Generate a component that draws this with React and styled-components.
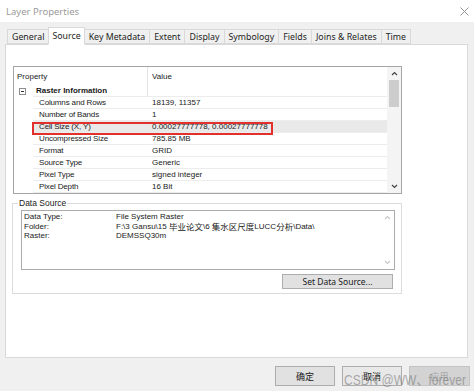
import React from 'react'
import styled, { createGlobalStyle } from 'styled-components'

const GlobalStyle = createGlobalStyle`
  html, body {
    margin: 0;
    padding: 0;
    background: #f0f0f0;
  }
  body {
    font-family: "Noto Sans", "Noto Sans CJK SC", sans-serif;
  }
  * {
    box-sizing: border-box;
  }
`

const Window = styled.div`
  position: relative;
  width: 474px;
  height: 391px;
  display: flex;
  flex-direction: column;
  background: #f0f0f0;
  overflow: hidden;
`

const TitleBar = styled.div`
  height: 22px;
  flex: none;
  background: #fff;
  display: flex;
  align-items: center;
  justify-content: space-between;
  padding: 0 5px 0 6px;
  font-size: 9.5px;
  color: #9a9a9a;
`

const TabStrip = styled.div`
  height: 22px;
  flex: none;
  display: flex;
  align-items: flex-end;
  padding-left: 7px;
  position: relative;
  z-index: 1;
`

const Tab = styled.div`
  height: ${p => (p.$active ? 18 : 15)}px;
  margin-bottom: ${p => (p.$active ? -1 : 0)}px;
  margin-left: -1px;
  padding: 0 ${p => (p.$active ? 3 : 4)}px;
  display: flex;
  align-items: ${p => (p.$active ? 'flex-start' : 'center')};
  padding-top: ${p => (p.$active ? 2 : 0)}px;
  background: ${p => (p.$active ? '#fff' : '#f0f0f0')};
  border: 1px solid #d9d9d9;
  border-bottom-color: ${p => (p.$active ? '#fff' : '#d9d9d9')};
  font-size: 8.8px;
  color: #1e1e1e;
  white-space: nowrap;
  &:first-child {
    margin-left: 0;
  }
`

const Panel = styled.div`
  height: 314px;
  flex: none;
  margin: 0 6px 0 5px;
  background: #fff;
  border: 1px solid #d9d9d9;
  padding: 21px 0 0 7px;
  font-family: "Liberation Sans", Arial, "Noto Sans CJK SC", sans-serif;
  font-size: 8px;
  color: #1a1a1a;
`

const Grid = styled.div`
  width: 389px;
  height: 128px;
  border: 1px solid #a5a5a5;
  display: flex;
`

const GridBody = styled.div`
  flex: 1;
  display: flex;
  flex-direction: column;
`

const HeaderRow = styled.div`
  height: 18px;
  display: flex;
  align-items: center;
`

const HeaderCell = styled.div`
  height: 100%;
  display: flex;
  align-items: center;
  width: ${p => p.$width || 'auto'};
  padding-left: ${p => p.$pad}px;
  border-right: ${p => (p.$divider ? '1px solid #e3e3e3' : 'none')};
  flex: ${p => (p.$width ? 'none' : 1)};
`

const Row = styled.div`
  position: relative;
  height: 12px;
  display: flex;
`

const Gutter = styled.div`
  width: 19px;
  flex: none;
  display: flex;
  align-items: center;
  justify-content: center;
  padding-right: 3px;
`

const Expander = styled.div`
  width: 7px;
  height: 7px;
  border: 1px solid #8c8c8c;
  position: relative;
  &::after {
    content: '';
    position: absolute;
    left: 1px;
    right: 1px;
    top: 2px;
    height: 1px;
    background: #333;
  }
`

const Cells = styled.div`
  flex: 1;
  display: flex;
  border-bottom: 1px solid #ececec;
  background: ${p => (p.$selected ? '#e9e9e9' : 'transparent')};
`

const Label = styled.div`
  width: 115px;
  flex: none;
  display: flex;
  align-items: center;
  padding-left: ${p => (p.$category ? 3 : 6)}px;
  font-weight: ${p => (p.$category ? 700 : 400)};
  letter-spacing: ${p => (p.$category ? 0 : -0.15)}px;
  border-right: ${p => (p.$category ? '1px solid #e3e3e3' : 'none')};
  white-space: nowrap;
`

const Value = styled.div`
  flex: 1;
  display: flex;
  align-items: center;
  padding-left: 4px;
  white-space: nowrap;
`

const Highlight = styled.div`
  position: absolute;
  left: 18px;
  top: 1px;
  width: 241px;
  height: 13px;
  border: 2px solid #e2302c;
`

const ScrollBar = styled.div`
  width: 14px;
  flex: none;
  display: flex;
  flex-direction: column;
  background: ${p => (p.$disabled ? 'transparent' : '#f4f4f4')};
`

const ScrollArrow = styled.div`
  height: 13px;
  flex: none;
  display: flex;
  align-items: center;
  justify-content: center;
`

const ScrollTrack = styled.div`
  flex: 1;
  padding: 0 2px;
`

const Thumb = styled.div`
  height: 27px;
  background: #cdcdcd;
`

const GroupBox = styled.fieldset`
  width: 390px;
  margin: 4px 0 0 -1px;
  padding: 2px 6px 4px 8px;
  border: 1px solid #dcdcdc;
`

const Legend = styled.legend`
  padding: 0 1px;
  margin-left: -3px;
  font-size: 8.5px;
  line-height: 10px;
  color: #1a1a1a;
`

const TextBox = styled.div`
  height: 60px;
  border: 1px solid #ababab;
  display: flex;
`

const InfoLines = styled.div`
  flex: 1;
  padding: 1px 0 0 2px;
`

const InfoLine = styled.div`
  height: 9.4px;
  display: flex;
  align-items: center;
  white-space: pre;
`

const InfoKey = styled.span`
  width: 92px;
  flex: none;
`

const Cjk = styled.span`
  font-family: "Noto Sans CJK SC", sans-serif;
  font-size: 8.5px;
`

const ActionRow = styled.div`
  display: flex;
  justify-content: flex-end;
  margin-top: 4px;
  padding-right: 2px;
`

const Button = styled.div`
  width: ${p => p.$width}px;
  height: ${p => p.$height}px;
  display: flex;
  align-items: center;
  justify-content: center;
  background: ${p => (p.$disabled ? '#d3d3d3' : p.$light ? '#e8e8e8' : '#e1e1e1')};
  border: 1px solid ${p => (p.$disabled ? '#c4c4c4' : '#adadad')};
  color: ${p => (p.$disabled ? '#a8a8a8' : '#1a1a1a')};
  font-family: "Noto Sans", "Noto Sans CJK SC", sans-serif;
  font-size: ${p => p.$size || 9}px;
`

const Footer = styled.div`
  flex: 1;
  display: flex;
  justify-content: flex-end;
  align-items: flex-start;
  gap: 7px;
  padding: 8px 4px 0 0;
`

const Watermark = styled.div`
  position: absolute;
  left: 344px;
  top: 369px;
  font-family: "Liberation Sans", Arial, "Noto Sans CJK SC", sans-serif;
  font-size: 14px;
  color: rgba(110, 110, 110, 0.55);
  white-space: nowrap;
  transform: scaleX(0.86);
  transform-origin: left center;
  pointer-events: none;
`

const Chevron = ({ up, color = '#404040' }) => (
  <svg width="7" height="5" viewBox="0 0 7 5">
    <polyline
      points={up ? '1,4 3.5,1.5 6,4' : '1,1 3.5,3.5 6,1'}
      fill="none"
      stroke={color}
      strokeWidth="1.1"
    />
  </svg>
)

const CloseIcon = () => (
  <svg width="9" height="9" viewBox="0 0 9 9">
    <path d="M0.5 0.5 L8.5 8.5 M8.5 0.5 L0.5 8.5" stroke="#8a8a8a" strokeWidth="0.9" />
  </svg>
)

const tabs = ['General', 'Source', 'Key Metadata', 'Extent', 'Display', 'Symbology', 'Fields', 'Joins & Relates', 'Time']

const rasterRows = [
  ['Columns and Rows', '18139, 11357'],
  ['Number of Bands', '1'],
  ['Cell Size (X, Y)', '0.00027777778, 0.00027777778', true],
  ['Uncompressed Size', '785.85 MB'],
  ['Format', 'GRID'],
  ['Source Type', 'Generic'],
  ['Pixel Type', 'signed integer'],
  ['Pixel Depth', '16 Bit'],
]

const App = () => {
  return (
    <Window>
      <GlobalStyle />
      <TitleBar>
        <span>Layer Properties</span>
        <CloseIcon />
      </TitleBar>
      <TabStrip>
        {tabs.map(t => (
          <Tab key={t} $active={t === 'Source'}>{t}</Tab>
        ))}
      </TabStrip>
      <Panel>
        <Grid>
          <GridBody>
            <HeaderRow>
              <HeaderCell $width="134px" $pad={3} $divider>Property</HeaderCell>
              <HeaderCell $pad={4}>Value</HeaderCell>
            </HeaderRow>
            <Row>
              <Gutter><Expander /></Gutter>
              <Cells>
                <Label $category>Raster Information</Label>
                <Value />
              </Cells>
            </Row>
            {rasterRows.map(([name, value, selected]) => (
              <Row key={name}>
                <Gutter />
                <Cells $selected={selected}>
                  <Label>{name}</Label>
                  <Value>{value}</Value>
                </Cells>
                {selected && <Highlight />}
              </Row>
            ))}
          </GridBody>
          <ScrollBar>
            <ScrollArrow><Chevron up /></ScrollArrow>
            <ScrollTrack><Thumb /></ScrollTrack>
            <ScrollArrow><Chevron /></ScrollArrow>
          </ScrollBar>
        </Grid>

        <GroupBox>
          <Legend>Data Source</Legend>
          <TextBox>
            <InfoLines>
              <InfoLine><InfoKey>Data Type:</InfoKey>File System Raster</InfoLine>
              <InfoLine>
                <InfoKey>Folder:</InfoKey>
                {'F:\\3 Gansu\\15 '}<Cjk>毕业论文</Cjk>{'\\6 '}<Cjk>集水区尺度</Cjk>LUCC<Cjk>分析</Cjk>{'\\Data\\'}
              </InfoLine>
              <InfoLine><InfoKey>Raster:</InfoKey>DEMSSQ30m</InfoLine>
            </InfoLines>
            <ScrollBar $disabled>
              <ScrollArrow><Chevron up color="#c8c8c8" /></ScrollArrow>
              <ScrollTrack />
              <ScrollArrow><Chevron color="#c8c8c8" /></ScrollArrow>
            </ScrollBar>
          </TextBox>
          <ActionRow>
            <Button $width={111} $height={15} $size={8.5}>Set Data Source...</Button>
          </ActionRow>
        </GroupBox>
      </Panel>
      <Footer>
        <Button $width={60} $height={20}>确定</Button>
        <Button $width={60} $height={20} $light>取消</Button>
        <Button $width={61} $height={20} $disabled>应用</Button>
      </Footer>
      <Watermark>CSDN @WW、forever</Watermark>
    </Window>
  )
}

export default App
